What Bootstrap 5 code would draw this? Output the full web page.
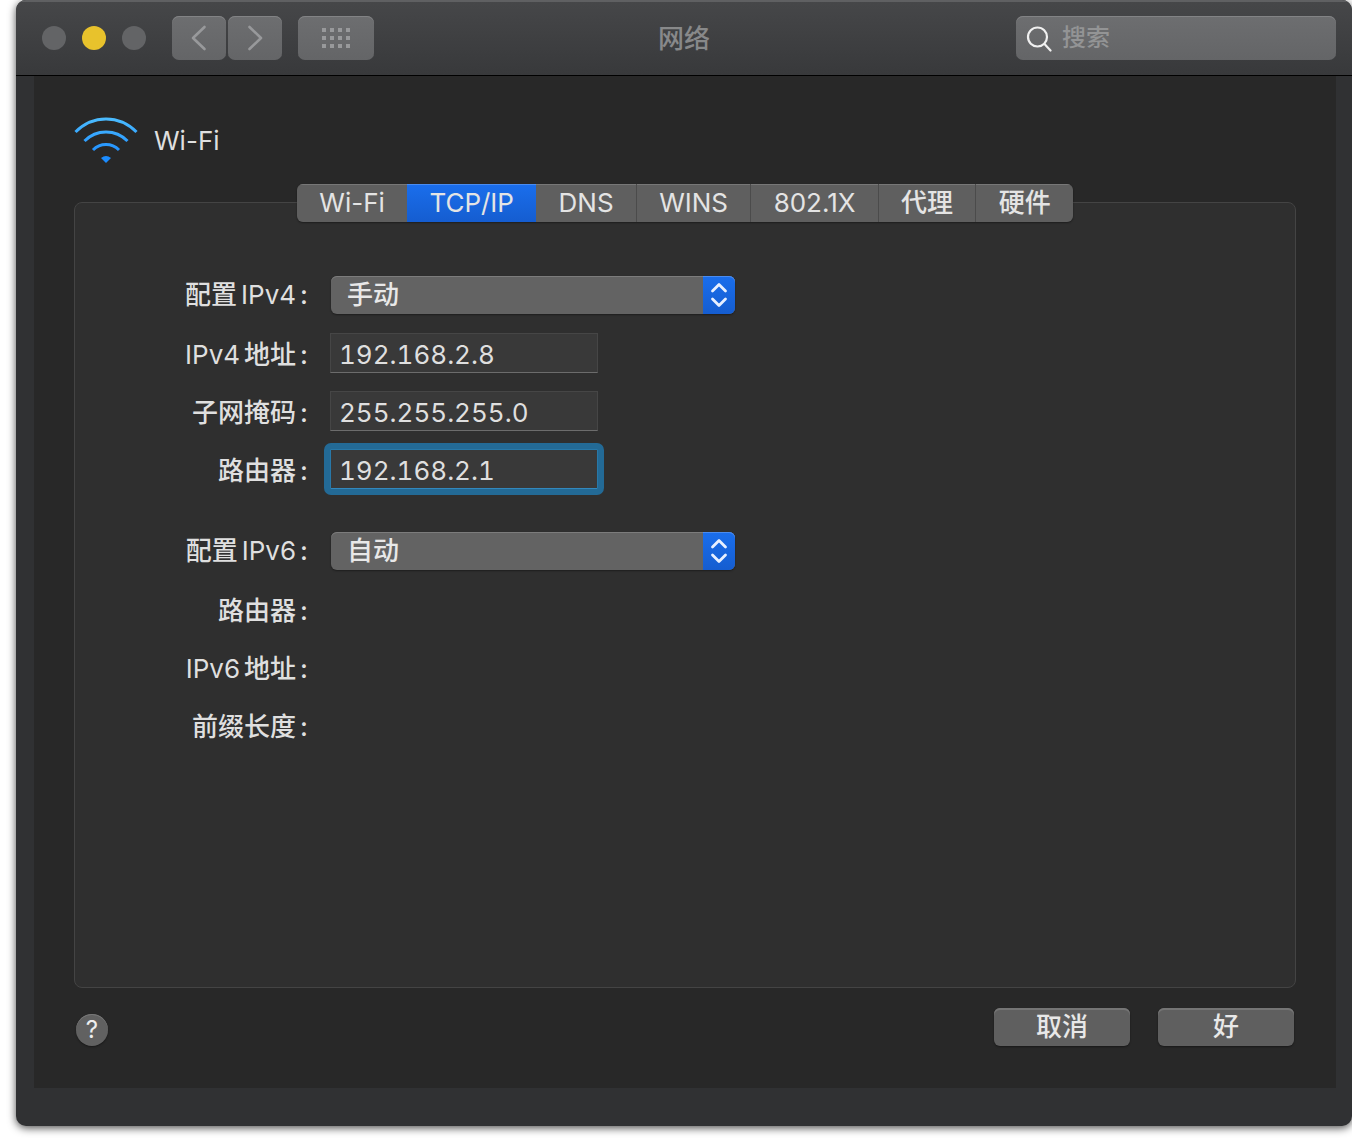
<!DOCTYPE html>
<html lang="zh-CN" data-bs-theme="dark">
<head>
<meta charset="utf-8">
<meta name="viewport" content="width=device-width, initial-scale=1">
<title>网络</title>
<link rel="stylesheet" href="https://cdn.jsdelivr.net/npm/bootstrap@5.3.0/dist/css/bootstrap.min.css">
<style>
  :root { --ink: #dfdfdf; --control: #5f5f5f; --accent-top: #1a6eec; --accent-bottom: #155dd0; }
  body {
    background: #fff; color: var(--ink);
    font-family: Inter, "Noto Sans CJK SC", sans-serif; font-size: 26px; line-height: 38px; font-weight: 500;
  }
  button, input, select { font-weight: 500; }
  .app-window {
    min-height: calc(100vh - 16px); margin: 0 0 16px 16px;
    background: #303133; border-radius: 10px; overflow: hidden;
    box-shadow: 0 2px 8px rgba(0,0,0,.7);
  }
  .title-bar {
    height: 76px; padding: 0 16px;
    background: linear-gradient(#464749, #38393b);
    border-bottom: 1px solid #000; box-shadow: inset 0 2px #5f6062;
  }
  .lights { padding-left: 10px; margin-right: 26px; }
  .light { width: 24px; height: 24px; border-radius: 50%; background: #636466; border: 0; padding: 0; }
  .light-min { background: #e8c22c; }
  .history { gap: 2px; }
  .tool, .search-box {
    height: 44px; border: 0; border-radius: 7px; color: #98999b;
    background: linear-gradient(#6d6e70, #646567); box-shadow: inset 0 1px #828385;
  }
  .tool { width: 54px; padding: 0; }
  .tool-wide { width: 76px; }
  .window-title { color: #88898a; padding-top: 2px; }
  .search-box { width: 320px; padding-left: 10px; }
  .search-box input { color: var(--ink); font-size: 24px; outline: 0; line-height: 36px; }
  .search-box input::placeholder { color: #939495; opacity: 1; }
  .pane { background: #282828; margin: 0 16px 38px 18px; padding: 40px 40px 42px; }
  .heading { height: 50px; gap: 16px; }
  .heading svg { margin-bottom: 4px; }
  .tab-strip {
    width: 776px; margin-top: 18px; border-radius: 6px; overflow: hidden; z-index: 1;
    box-shadow: 0 1px 2px rgba(0,0,0,.4);
  }
  .tab-strip .nav-link {
    height: 38px; padding: 0; color: #e4e4e4; border-radius: 0; line-height: 38px;
    background: var(--control); box-shadow: inset 0 1px #777;
  }
  .tab-strip .nav-item + .nav-item:not(.plain) { border-left: 1px solid #4b4b4b; }
  .tab-strip .nav-link.active {
    color: #e4e4e4; background: linear-gradient(var(--accent-top), var(--accent-bottom)); box-shadow: inset 0 1px #4a8cf0;
  }
  .tab-strip, .heading { font-weight: 400; }
  .group-box {
    margin-top: -20px; padding: 72px 0 40px; background: #2f2f2f;
    border: 1px solid #444; border-radius: 8px; gap: 18px;
  }
  .form-line { min-height: 40px; gap: 22px; }
  .form-line > .caption { width: 233px; text-align: right; line-height: 40px; }
  .form-line.text-line > .caption { padding-top: 4px; line-height: 36px; }
  .latin { font-weight: 400; }
  .colon { margin-left: 4px; }
  .ipv6-start { margin-top: 24px; }
  .popup { width: 404px; height: 38px; margin: 1px; }
  .popup select {
    appearance: none; width: 100%; height: 38px; padding: 0 48px 0 16px; line-height: 38px;
    color: #e8e8e8; background: #636363; border: 0; border-radius: 6px;
    box-shadow: inset 0 1px #7c7c7c, 0 1px 2px rgba(0,0,0,.4);
  }
  .popup .stepper {
    position: absolute; top: 0; right: 0; width: 32px; height: 38px; pointer-events: none;
    background: linear-gradient(var(--accent-top), var(--accent-bottom)); border-radius: 0 6px 6px 0;
    box-shadow: inset 0 1px #4a8cf0;
  }
  .address {
    width: 268px; height: 40px; padding: 2px 8px 0; color: var(--ink); font-weight: 400; font-variant-numeric: tabular-nums;
    background: #393939; border: 1px solid #464646; border-bottom-color: #6c6c6c; border-radius: 0; outline: 0;
  }
  .address.editing { border-color: #2878a8; border-bottom-color: #3288bd; outline: 6px solid #236a96; border-radius: 1px; }
  .actions { margin-top: 20px; gap: 28px; padding: 0 2px; }
  .push {
    width: 136px; height: 38px; padding: 0; line-height: 38px; border: 0; border-radius: 6px; color: #e8e8e8;
    background: var(--control); box-shadow: inset 0 2px #757575, 0 1px 2px rgba(0,0,0,.4);
  }
  .help {
    width: 32px; height: 32px; margin-top: 6px; padding: 0; border: 0; border-radius: 50%;
    color: #eee; background: #616161; font-size: 24px; font-weight: 400; line-height: 32px; box-shadow: inset 0 1px #777, 0 1px 2px rgba(0,0,0,.4);
  }
</style>
</head>
<body>
<div class="app-window d-flex flex-column">
  <header class="title-bar d-flex align-items-center">
    <div class="d-flex align-items-center flex-fill w-50">
      <div class="lights d-flex gap-3">
        <button class="light" type="button" aria-label="关闭"></button>
        <button class="light light-min" type="button" aria-label="最小化"></button>
        <button class="light" type="button" aria-label="缩放"></button>
      </div>
      <div class="history d-flex">
        <button class="tool d-flex align-items-center justify-content-center" type="button" aria-label="后退">
          <svg width="16" height="26" viewBox="0 0 16 26" fill="none" stroke="currentColor" stroke-width="2.6" stroke-linecap="round" stroke-linejoin="round"><path d="M13.500 2 2 13l11.500 11"/></svg>
        </button>
        <button class="tool d-flex align-items-center justify-content-center" type="button" aria-label="前进">
          <svg width="16" height="26" viewBox="0 0 16 26" fill="none" stroke="currentColor" stroke-width="2.6" stroke-linecap="round" stroke-linejoin="round"><path d="M2.500 2 14 13 2.500 24"/></svg>
        </button>
      </div>
      <button class="tool tool-wide ms-3 d-flex align-items-center justify-content-center" type="button" aria-label="显示全部">
        <svg width="28" height="20" viewBox="0 0 28 20" fill="currentColor"><path d="M0 0h4v4H0zM8 0h4v4H8zM16 0h4v4h-4zM24 0h4v4h-4zM0 8h4v4H0zM8 8h4v4H8zM16 8h4v4h-4zM24 8h4v4h-4zM0 16h4v4H0zM8 16h4v4H8zM16 16h4v4h-4zM24 16h4v4h-4z"/></svg>
      </button>
    </div>
    <div class="window-title flex-shrink-0">网络</div>
    <div class="d-flex justify-content-end flex-fill w-50">
      <label class="search-box d-flex align-items-center gap-2">
        <svg class="flex-shrink-0" width="28" height="28" viewBox="0 0 28 28" fill="none" stroke="#f0f0f0" stroke-width="2.2" stroke-linecap="round"><circle cx="11.500" cy="13" r="9.500"/><path d="m18.500 20 6 6.500"/></svg>
        <input class="flex-fill w-100 p-0 border-0 bg-transparent" type="search" placeholder="搜索" aria-label="搜索">
      </label>
    </div>
  </header>

  <main class="pane d-flex flex-column flex-fill">
    <div class="heading d-flex align-items-center">
      <svg width="64" height="48" viewBox="0 0 64 48" fill="none" stroke="url(#wave)" stroke-width="3">
        <defs><linearGradient id="wave" gradientUnits="userSpaceOnUse" x1="0" y1="0" x2="0" y2="46"><stop stop-color="#4fc0ff"/><stop offset="1" stop-color="#1685ff"/></linearGradient></defs>
        <path d="M1.500 17Q14.500 4 32 4T62.500 17M10.500 26Q19.500 17 32 17T53.500 26M19 35Q24.500 29.500 32 29.500T45 35"/>
        <path d="M27 43Q32 39 37 43L32 48Z" fill="#1b8cff" stroke="none"/>
      </svg>
      <span>Wi-Fi</span>
    </div>

    <ul class="tab-strip nav nav-fill flex-nowrap align-self-center position-relative">
      <li class="nav-item"><a class="nav-link" href="#">Wi-Fi</a></li>
      <li class="nav-item plain"><a class="nav-link active" href="#" aria-current="page">TCP/IP</a></li>
      <li class="nav-item plain"><a class="nav-link" href="#">DNS</a></li>
      <li class="nav-item"><a class="nav-link" href="#">WINS</a></li>
      <li class="nav-item"><a class="nav-link" href="#">802.1X</a></li>
      <li class="nav-item"><a class="nav-link fw-medium" href="#">代理</a></li>
      <li class="nav-item"><a class="nav-link fw-medium" href="#">硬件</a></li>
    </ul>

    <form class="group-box d-flex flex-column flex-fill">
      <div class="form-line d-flex">
        <label class="caption" for="v4mode">配置<span class="latin ms-1">IPv4</span><span class="colon">:</span></label>
        <div class="popup position-relative">
          <select id="v4mode"><option>手动</option><option>自动</option></select>
          <span class="stepper d-flex align-items-center justify-content-center"><svg width="18" height="26" viewBox="0 0 18 26" fill="none" stroke="#e8f0ff" stroke-width="2.800" stroke-linecap="round" stroke-linejoin="round"><path d="M2.500 9 9 2.500 15.500 9M2.500 17 9 23.500 15.500 17"/></svg></span>
        </div>
      </div>
      <div class="form-line text-line d-flex">
        <label class="caption" for="v4addr"><span class="latin me-1">IPv4</span>地址<span class="colon">:</span></label>
        <input class="address" id="v4addr" type="text" value="192.168.2.8">
      </div>
      <div class="form-line text-line d-flex">
        <label class="caption" for="mask">子网掩码<span class="colon">:</span></label>
        <input class="address" id="mask" type="text" value="255.255.255.0">
      </div>
      <div class="form-line text-line d-flex">
        <label class="caption" for="router">路由器<span class="colon">:</span></label>
        <input class="address editing" id="router" type="text" value="192.168.2.1">
      </div>
      <div class="form-line ipv6-start d-flex">
        <label class="caption" for="v6mode">配置<span class="latin ms-1">IPv6</span><span class="colon">:</span></label>
        <div class="popup position-relative">
          <select id="v6mode"><option>自动</option><option>手动</option></select>
          <span class="stepper d-flex align-items-center justify-content-center"><svg width="18" height="26" viewBox="0 0 18 26" fill="none" stroke="#e8f0ff" stroke-width="2.800" stroke-linecap="round" stroke-linejoin="round"><path d="M2.500 9 9 2.500 15.500 9M2.500 17 9 23.500 15.500 17"/></svg></span>
        </div>
      </div>
      <div class="form-line text-line d-flex"><span class="caption">路由器<span class="colon">:</span></span></div>
      <div class="form-line text-line d-flex"><span class="caption"><span class="latin me-1">IPv6</span>地址<span class="colon">:</span></span></div>
      <div class="form-line text-line d-flex"><span class="caption">前缀长度<span class="colon">:</span></span></div>
    </form>

    <div class="actions d-flex align-items-start">
      <button class="help me-auto" type="button" aria-label="帮助">?</button>
      <button class="push" type="button">取消</button>
      <button class="push" type="button">好</button>
    </div>
  </main>
</div>
<script src="https://cdn.jsdelivr.net/npm/bootstrap@5.3.0/dist/js/bootstrap.bundle.min.js"></script>
</body>
</html>
